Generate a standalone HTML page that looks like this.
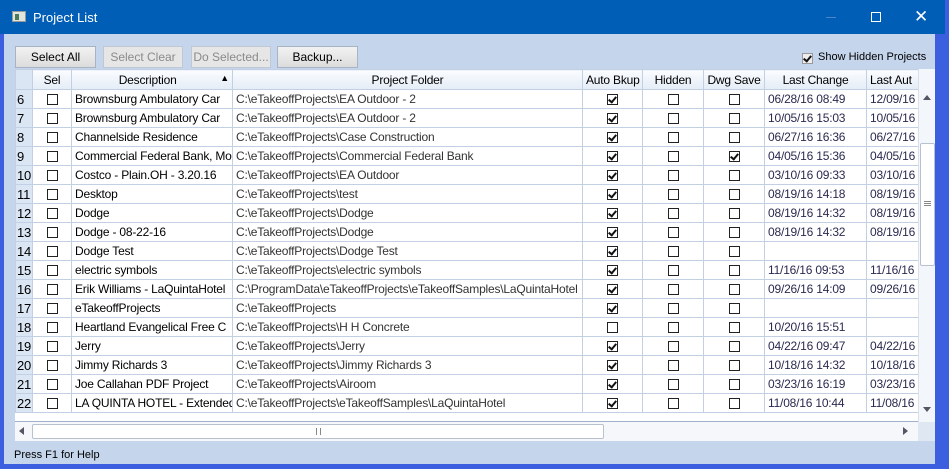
<!DOCTYPE html>
<html><head><style>
*{margin:0;padding:0;box-sizing:border-box}
body{width:949px;height:469px;background:#3c5fe0;font-family:"Liberation Sans",sans-serif;font-size:12px;position:relative;overflow:hidden}
.win{position:absolute;left:4px;top:0;width:931px;height:464px;background:#c5d6ec}
.title{position:absolute;left:0;top:0;width:945px;height:34px;background:#005eb7;color:#fff;font-size:13px}
.btn{position:absolute;top:46px;height:22px;border:1px solid #a8b4c4;background:linear-gradient(#f2f2f2,#dcdcdc);font-size:12px;text-align:center;line-height:20px;color:#000}
.dis{color:#8a8a8a;background:#e6e6e6;border-color:#c0c8d4}
.grid{position:absolute;left:15px;top:69px;width:903px;height:353px;background:#fff;border-bottom:1px solid #9fb0c8;overflow:hidden}
table{border-collapse:collapse;table-layout:fixed;width:911px}
td,th{border:1px solid #c3d0e3;height:19px;white-space:nowrap;overflow:hidden;padding:0 3px;font-weight:normal;font-size:12px;letter-spacing:-0.2px}
th{background:linear-gradient(#fafcff,#e4ecf6);height:20px;color:#000}
td.n{background:#dbe6f5;padding:0 1px;font-size:13px}
td.f{color:#333}
td.d{color:#2a2a50}
.cb{display:inline-block;width:11px;height:11px;border:1px solid #222;vertical-align:middle;position:relative;background:#fff}
.cb.k::after{content:"";position:absolute;left:2px;top:0px;width:3px;height:6px;border:solid #111;border-width:0 2px 2px 0;transform:rotate(40deg)}
.c{text-align:center}
</style></head><body>
<div class="win"></div>
<div class="title">
 <div style="position:absolute;left:12px;top:11px;width:14px;height:11px;background:#dfe6e0;border:1px solid #999"><div style="position:absolute;left:2px;top:2px;width:4px;height:6px;background:#4a7a5a"></div></div>
 <div style="position:absolute;left:33px;top:10px">Project List</div>
 <div style="position:absolute;left:826px;top:17px;width:10px;height:1px;background:#4d86c8"></div>
 <div style="position:absolute;left:871px;top:12px;width:10px;height:10px;border:1px solid #fff"></div>
 <div style="position:absolute;left:914px;top:7px;font-size:17px">✕</div>
</div>
<div class="btn" style="left:15px;width:81px">Select All</div>
<div class="btn dis" style="left:103px;width:80px">Select Clear</div>
<div class="btn dis" style="left:191px;width:80px">Do Selected...</div>
<div class="btn" style="left:277px;width:81px">Backup...</div>
<div style="position:absolute;left:802px;top:51px"><span class="cb k" style="border-color:#999;background:#eee"></span></div>
<div style="position:absolute;left:818px;top:51px;font-size:11px">Show Hidden Projects</div>
<div class="grid">
<table>
<colgroup><col style="width:17px"><col style="width:39px"><col style="width:161px"><col style="width:350px"><col style="width:60px"><col style="width:61px"><col style="width:61px"><col style="width:102px"><col style="width:60px"></colgroup>
<tr><th style="background:#dbe6f5"></th><th>Sel</th><th>Description <span style="float:right;font-size:9px">▲</span></th><th>Project Folder</th><th>Auto Bkup</th><th>Hidden</th><th>Dwg Save</th><th>Last Change</th><th style="text-align:left">Last Aut</th></tr>
<tr><td class="n">6</td><td class="c"><span class="cb"></span></td><td>Brownsburg Ambulatory Car</td><td class="f">C:\eTakeoffProjects\EA Outdoor - 2</td><td class="c"><span class="cb k"></span></td><td class="c"><span class="cb"></span></td><td class="c"><span class="cb"></span></td><td class="d">06/28/16 08:49</td><td class="d">12/09/16</td></tr>
<tr><td class="n">7</td><td class="c"><span class="cb"></span></td><td>Brownsburg Ambulatory Car</td><td class="f">C:\eTakeoffProjects\EA Outdoor - 2</td><td class="c"><span class="cb k"></span></td><td class="c"><span class="cb"></span></td><td class="c"><span class="cb"></span></td><td class="d">10/05/16 15:03</td><td class="d">10/05/16</td></tr>
<tr><td class="n">8</td><td class="c"><span class="cb"></span></td><td>Channelside Residence</td><td class="f">C:\eTakeoffProjects\Case Construction</td><td class="c"><span class="cb k"></span></td><td class="c"><span class="cb"></span></td><td class="c"><span class="cb"></span></td><td class="d">06/27/16 16:36</td><td class="d">06/27/16</td></tr>
<tr><td class="n">9</td><td class="c"><span class="cb"></span></td><td>Commercial Federal Bank, Mo</td><td class="f">C:\eTakeoffProjects\Commercial Federal Bank</td><td class="c"><span class="cb k"></span></td><td class="c"><span class="cb"></span></td><td class="c"><span class="cb k"></span></td><td class="d">04/05/16 15:36</td><td class="d">04/05/16</td></tr>
<tr><td class="n">10</td><td class="c"><span class="cb"></span></td><td>Costco - Plain.OH - 3.20.16</td><td class="f">C:\eTakeoffProjects\EA Outdoor</td><td class="c"><span class="cb k"></span></td><td class="c"><span class="cb"></span></td><td class="c"><span class="cb"></span></td><td class="d">03/10/16 09:33</td><td class="d">03/10/16</td></tr>
<tr><td class="n">11</td><td class="c"><span class="cb"></span></td><td>Desktop</td><td class="f">C:\eTakeoffProjects\test</td><td class="c"><span class="cb k"></span></td><td class="c"><span class="cb"></span></td><td class="c"><span class="cb"></span></td><td class="d">08/19/16 14:18</td><td class="d">08/19/16</td></tr>
<tr><td class="n">12</td><td class="c"><span class="cb"></span></td><td>Dodge</td><td class="f">C:\eTakeoffProjects\Dodge</td><td class="c"><span class="cb k"></span></td><td class="c"><span class="cb"></span></td><td class="c"><span class="cb"></span></td><td class="d">08/19/16 14:32</td><td class="d">08/19/16</td></tr>
<tr><td class="n">13</td><td class="c"><span class="cb"></span></td><td>Dodge - 08-22-16</td><td class="f">C:\eTakeoffProjects\Dodge</td><td class="c"><span class="cb k"></span></td><td class="c"><span class="cb"></span></td><td class="c"><span class="cb"></span></td><td class="d">08/19/16 14:32</td><td class="d">08/19/16</td></tr>
<tr><td class="n">14</td><td class="c"><span class="cb"></span></td><td>Dodge Test</td><td class="f">C:\eTakeoffProjects\Dodge Test</td><td class="c"><span class="cb k"></span></td><td class="c"><span class="cb"></span></td><td class="c"><span class="cb"></span></td><td class="d"></td><td class="d"></td></tr>
<tr><td class="n">15</td><td class="c"><span class="cb"></span></td><td>electric symbols</td><td class="f">C:\eTakeoffProjects\electric symbols</td><td class="c"><span class="cb k"></span></td><td class="c"><span class="cb"></span></td><td class="c"><span class="cb"></span></td><td class="d">11/16/16 09:53</td><td class="d">11/16/16</td></tr>
<tr><td class="n">16</td><td class="c"><span class="cb"></span></td><td>Erik Williams - LaQuintaHotel</td><td class="f">C:\ProgramData\eTakeoffProjects\eTakeoffSamples\LaQuintaHotel</td><td class="c"><span class="cb k"></span></td><td class="c"><span class="cb"></span></td><td class="c"><span class="cb"></span></td><td class="d">09/26/16 14:09</td><td class="d">09/26/16</td></tr>
<tr><td class="n">17</td><td class="c"><span class="cb"></span></td><td>eTakeoffProjects</td><td class="f">C:\eTakeoffProjects</td><td class="c"><span class="cb k"></span></td><td class="c"><span class="cb"></span></td><td class="c"><span class="cb"></span></td><td class="d"></td><td class="d"></td></tr>
<tr><td class="n">18</td><td class="c"><span class="cb"></span></td><td>Heartland Evangelical Free C</td><td class="f">C:\eTakeoffProjects\H H Concrete</td><td class="c"><span class="cb"></span></td><td class="c"><span class="cb"></span></td><td class="c"><span class="cb"></span></td><td class="d">10/20/16 15:51</td><td class="d"></td></tr>
<tr><td class="n">19</td><td class="c"><span class="cb"></span></td><td>Jerry</td><td class="f">C:\eTakeoffProjects\Jerry</td><td class="c"><span class="cb k"></span></td><td class="c"><span class="cb"></span></td><td class="c"><span class="cb"></span></td><td class="d">04/22/16 09:47</td><td class="d">04/22/16</td></tr>
<tr><td class="n">20</td><td class="c"><span class="cb"></span></td><td>Jimmy Richards 3</td><td class="f">C:\eTakeoffProjects\Jimmy Richards 3</td><td class="c"><span class="cb k"></span></td><td class="c"><span class="cb"></span></td><td class="c"><span class="cb"></span></td><td class="d">10/18/16 14:32</td><td class="d">10/18/16</td></tr>
<tr><td class="n">21</td><td class="c"><span class="cb"></span></td><td>Joe Callahan PDF Project</td><td class="f">C:\eTakeoffProjects\Airoom</td><td class="c"><span class="cb k"></span></td><td class="c"><span class="cb"></span></td><td class="c"><span class="cb"></span></td><td class="d">03/23/16 16:19</td><td class="d">03/23/16</td></tr>
<tr><td class="n">22</td><td class="c"><span class="cb"></span></td><td>LA QUINTA HOTEL - Extended</td><td class="f">C:\eTakeoffProjects\eTakeoffSamples\LaQuintaHotel</td><td class="c"><span class="cb k"></span></td><td class="c"><span class="cb"></span></td><td class="c"><span class="cb"></span></td><td class="d">11/08/16 10:44</td><td class="d">11/08/16</td></tr>
</table>
</div>
<div style="position:absolute;left:918px;top:69px;width:17px;height:353px;background:#f3f6fa;border-left:1px solid #d8e0ea">
 <div style="position:absolute;left:4px;top:26px;border:4px solid transparent;border-bottom:5px solid #556;border-top:0"></div>
 <div style="position:absolute;left:1px;top:74px;width:15px;height:123px;background:#fff;border:1px solid #b8c2cf;border-radius:2px"><div style="position:absolute;left:3px;top:57px;width:7px;height:5px;border-top:1px solid #888;border-bottom:1px solid #888"></div><div style="position:absolute;left:3px;top:59px;width:7px;height:1px;background:#888"></div></div>
 <div style="position:absolute;left:4px;top:338px;border:4px solid transparent;border-top:5px solid #556;border-bottom:0"></div>
</div>
<div style="position:absolute;left:15px;top:422px;width:903px;height:19px;background:#f5f7fa">
 <div style="position:absolute;left:4px;top:5px;border:4px solid transparent;border-right:5px solid #556;border-left:0"></div>
 <div style="position:absolute;left:17px;top:2px;width:572px;height:15px;background:#fff;border:1px solid #b8c2cf;border-radius:2px"><div style="position:absolute;left:283px;top:3px;width:5px;height:7px;border-left:1px solid #888;border-right:1px solid #888"></div></div>
 <div style="position:absolute;left:888px;top:5px;border:4px solid transparent;border-left:5px solid #556;border-right:0"></div>
</div>
<div style="position:absolute;left:918px;top:422px;width:17px;height:19px;background:#dfe7f2"></div>
<div style="position:absolute;left:14px;top:449px;font-size:11px">Press F1 for Help</div>
<div style="position:absolute;left:0;top:464px;width:949px;height:5px;background:#3c5fe0"></div>
</body></html>
